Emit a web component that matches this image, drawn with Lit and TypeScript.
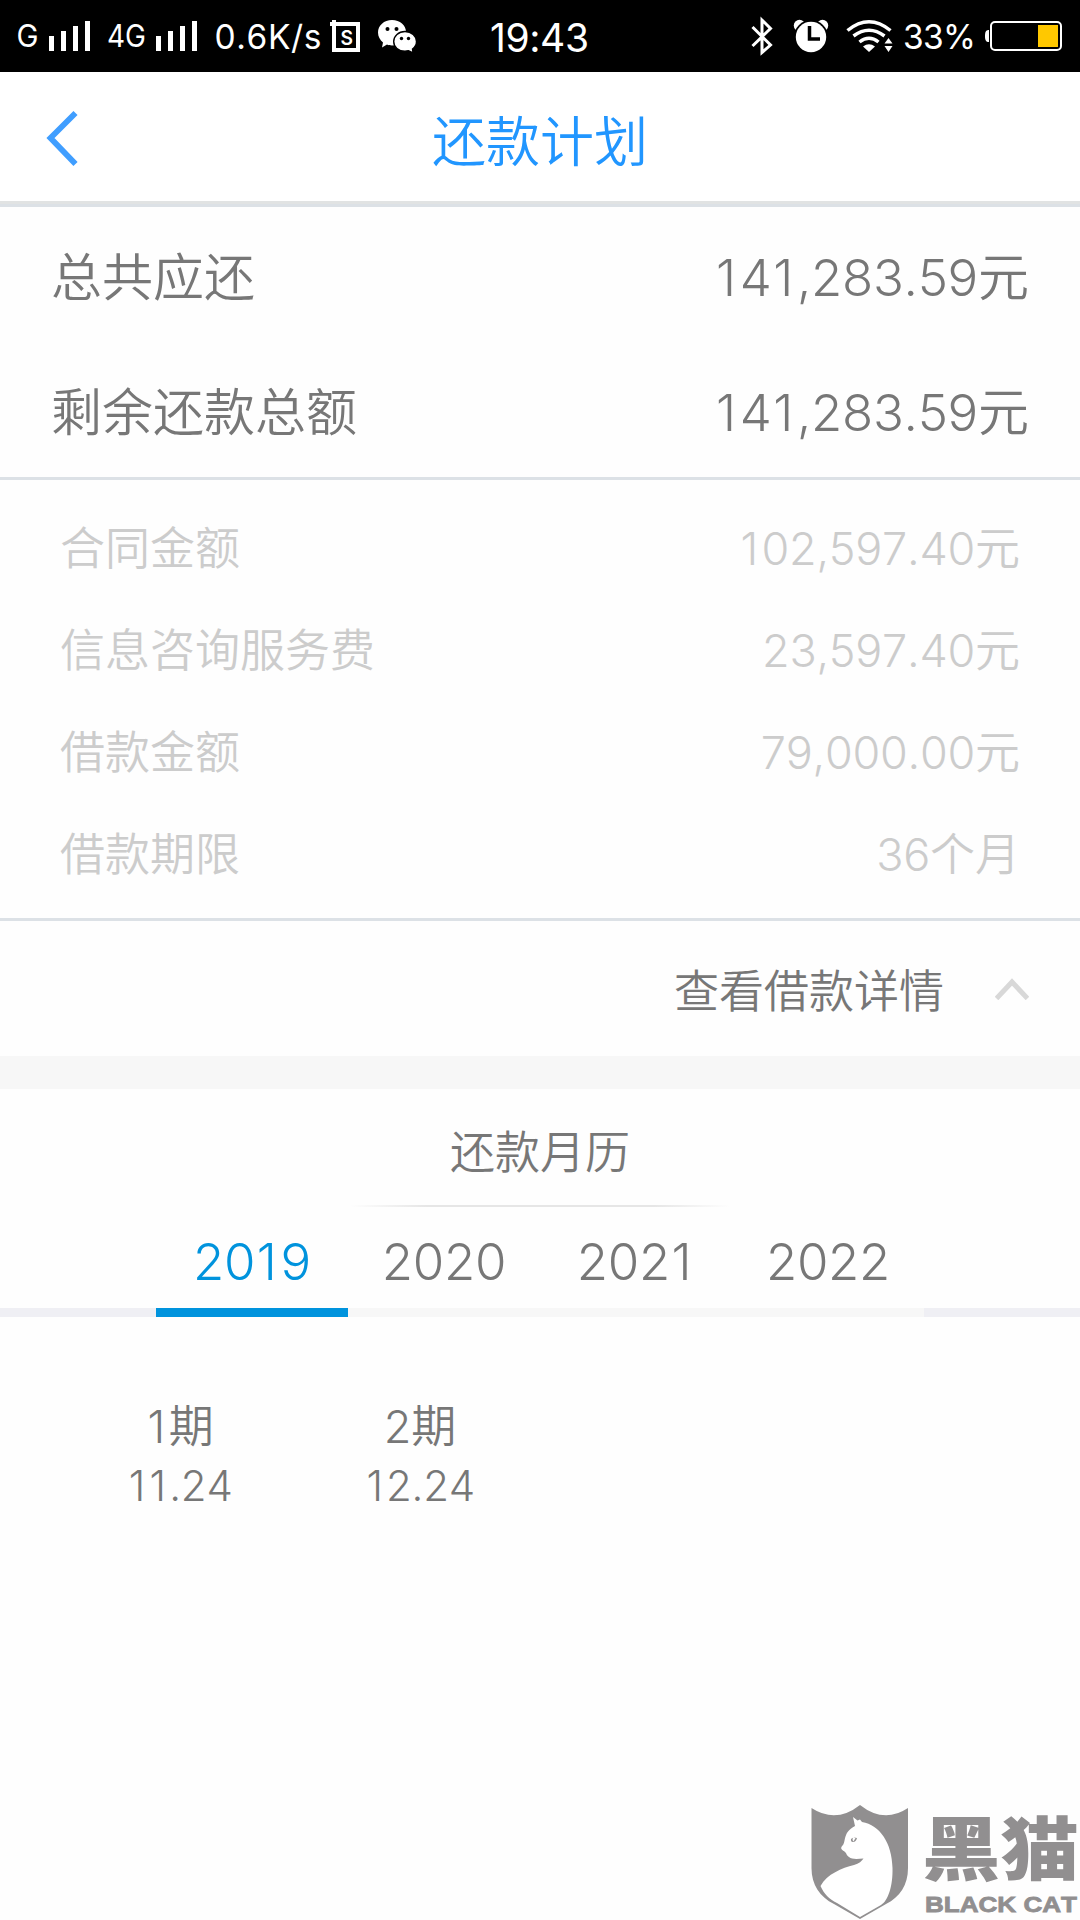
import { LitElement, html, svg, css } from "lit";
import { customElement, property, state } from "lit/decorators.js";
import { classMap } from "lit/directives/class-map.js";

// Gives the digit 1 an advance close to that of the other digits.
const digits = (s: string) =>
  [...s].map((c) => (c === "1" ? html`<span class="one">1</span>` : c));

const digitStyles = css`
  .num { letter-spacing: -0.006em; }
  .one { margin: 0 0.08em 0 0.03em; }
`;

@customElement("status-bar")
class StatusBar extends LitElement {
  static styles = css`
    :host { display: block; font-weight: 400; }
    .bar { display: block; width: 1080px; height: 72px; background: #000; }
    text { font-family: Inter, "Liberation Sans", sans-serif; fill: #fff; }
  `;
  private bars(x: number) {
    return [15, 20, 25, 30].map(
      (h, i) => svg`<rect x=${x + i * 12} y=${51 - h} width="5" height=${h} fill="#fff"></rect>`
    );
  }
  render() {
    return html`
      <svg class="bar" viewBox="0 0 1080 72">
        <text x="16.500" y="46.500" font-size="31" textLength="22" lengthAdjust="spacingAndGlyphs">G</text>
        ${this.bars(49)}
        <text x="107" y="46.500" font-size="31" textLength="39" lengthAdjust="spacingAndGlyphs">4G</text>
        ${this.bars(156)}
        <text x="214.500" y="49" font-size="33.500" textLength="107" lengthAdjust="spacing">0.6K/s</text>
        <path d="M334 24H358V50H334ZM330 24H336M334 20V26" fill="none" stroke="#fff" stroke-width="4"></path>
        <text x="340.500" y="44.500" font-size="19.500" font-weight="600" textLength="12.500" lengthAdjust="spacingAndGlyphs">S</text>
        <g fill="#fff">
          <path d="M392 20C400 20 406 25 406 32C406 40 400 45.500 392 45.500C390 45.500 388.500 45.200 387 44.600L382 47.500L383 42.500C380 40 378 36.500 378 32.500C378 25.500 384 20 392 20Z"></path>
          <path d="M405 31.500C411.500 31.500 416.500 36 416.500 41.500C416.500 44.500 415 47.200 412.500 49L413 53L408.500 50.800C407.300 51 406 51.200 405 51.200C398.500 51.200 393.700 47 393.700 41.500C393.700 36 398.500 31.500 405 31.500Z" stroke="#000" stroke-width="1.400"></path>
        </g>
        <g fill="#000"><circle cx="387.500" cy="29" r="2"></circle><circle cx="396.500" cy="29" r="2"></circle><circle cx="401.500" cy="38.500" r="1.700"></circle><circle cx="408.500" cy="38.500" r="1.700"></circle></g>
        <text x="490" y="51.500" font-size="39" textLength="99" lengthAdjust="spacing">19:43</text>
        <path d="M752.500 27L770.500 45L762 52.500V20L770.500 28.500L752.500 46" fill="none" stroke="#fff" stroke-width="3"></path>
        <g>
          <circle cx="799.500" cy="25.500" r="5.700" fill="#fff"></circle>
          <circle cx="822.500" cy="25.500" r="5.700" fill="#fff"></circle>
          <circle cx="811" cy="37" r="17" fill="#000"></circle>
          <circle cx="811" cy="37" r="15.200" fill="#fff"></circle>
          <path d="M809.500 26V39H820" fill="none" stroke="#000" stroke-width="3.500"></path>
        </g>
        <g fill="none" stroke="#fff" stroke-width="3.500">
          <path d="M847.500 30.500Q869 13 890.500 30.500"></path>
          <path d="M853.500 36Q869 24.500 884.500 36"></path>
          <path d="M859.500 42Q869 34.500 878.500 42"></path>
        </g>
        <path d="M863 46.500Q869 42 875 46.500L869 52Z" fill="#fff"></path>
        <path d="M884.500 43.500L888.500 38L892.500 43.500ZM884.500 46L888.500 52L892.500 46Z" fill="#fff"></path>
        <text x="903" y="49" font-size="33.500" textLength="73" lengthAdjust="spacing">33%</text>
        <path d="M989 30C985.800 30 985 32 985 36C985 40 985.800 42 989 42Z" fill="#fff"></path>
        <rect x="991" y="22" width="70" height="28" rx="4" fill="none" stroke="#fff" stroke-width="2"></rect>
        <rect x="1038" y="25" width="20" height="22" fill="#ffc800"></rect>
      </svg>
    `;
  }
}

@customElement("amount-row")
class AmountRow extends LitElement {
  @property() label = "";
  @property() value = "";
  @property() unit = "";
  static styles = [
    digitStyles,
    css`
      :host { display: flex; justify-content: space-between; align-items: center; }
      .value { display: flex; align-items: baseline; }
    `,
  ];
  render() {
    return html`<span>${this.label}</span>
      <span class="value"><span class="num">${digits(this.value)}</span><span>${this.unit}</span></span>`;
  }
}

@customElement("black-cat-mark")
class BlackCatMark extends LitElement {
  static styles = css`
    :host { display: block; }
    .mark { display: block; width: 270px; height: 150px; }
    .zh { font-family: "Noto Sans CJK SC", sans-serif; font-weight: 900; }
    .en { font-family: "Liberation Sans", sans-serif; font-weight: 700; stroke: #918f90; stroke-width: 0.8; }
  `;
  render() {
    return html`
      <svg class="mark" viewBox="810 1770 270 150" fill="#918f90">
        <path d="M811.500 1808Q836 1824 860 1805Q884 1824 908 1808V1868C908 1885 900 1897 886 1904L860 1919L834 1904C820 1897 811.500 1885 811.500 1868Z"></path>
        <path fill="#fff" d="M820.500 1886C827 1874 842 1868 854 1865C859 1863.500 862 1861 863.500 1858.500C857 1859 852 1859.500 849 1857C846 1855 847 1853.500 844.500 1851.500C841 1849.500 840 1848 843 1845C846 1841 843 1832 855 1826L853 1817L857.500 1820.500L860 1819.500L862 1822C880 1825 892 1843 892.500 1868C893 1886 888 1901 881 1905L860 1917L837 1903C829 1899 824 1894 820.500 1886Z"></path>
        <path d="M851 1839Q853 1836.500 857 1838Q856 1842 853 1842Q850.500 1842 851 1839Z"></path>
        <path fill="#fff" d="M853 1837L855.500 1838L853.500 1841.500L852.500 1840Z"></path>
        <text class="zh" x="922" y="1875" font-size="69" textLength="157" lengthAdjust="spacingAndGlyphs">黑猫</text>
        <text class="en" x="925" y="1912" font-size="22" textLength="152" lengthAdjust="spacingAndGlyphs">BLACK CAT</text>
      </svg>
    `;
  }
}

@customElement("app-root")
class AppRoot extends LitElement {
  @state() private year = "2019";
  private years = ["2019", "2020", "2021", "2022"];
  private totals = [
    ["总共应还", "141,283.59"],
    ["剩余还款总额", "141,283.59"],
  ];
  private details = [
    ["合同金额", "102,597.40", "元"],
    ["信息咨询服务费", "23,597.40", "元"],
    ["借款金额", "79,000.00", "元"],
    ["借款期限", "36", "个月"],
  ];
  private periods = [
    ["1期", "11.24"],
    ["2期", "12.24"],
  ];

  static styles = [
    digitStyles,
    css`
      :host {
        display: block;
        font-family: Inter, "Noto Sans CJK SC", sans-serif;
        font-weight: 350;
        font-kerning: none;
        font-feature-settings: "calt" 0;
        color: #777;
      }
      * { box-sizing: border-box; }
      .page { position: relative; display: flex; flex-direction: column; width: 1080px; height: 1920px; background: #fefefe; overflow: hidden; }
      .header {
        display: grid; grid-template-columns: 120px 1fr 120px; align-items: center;
        height: 135px; background: #fff; color: #2196ff;
        border-bottom: 3px solid #dce1e6; box-shadow: inset 0 -3px #e1e3e3;
      }
      .back { display: block; width: 36px; height: 60px; margin-left: 45px; }
      .title { text-align: center; font-size: 54px; line-height: 72px; padding-top: 9px; }
      .totals { border-bottom: 3px solid #dce1e6; padding: 0 51px; }
      .totals amount-row { height: 135px; padding-bottom: 1px; font-size: 51px; }
      .details { border-bottom: 3px solid #dce1e6; padding: 15px 60px; color: #ccc; }
      .details amount-row { height: 102px; padding-bottom: 2px; font-size: 45px; }
      .toggle { display: flex; justify-content: flex-end; align-items: center; gap: 51px; height: 135px; padding-right: 51px; font-size: 45px; }
      .chevron { width: 34px; height: 22px; }
      .gap { height: 33px; background: #f7f7f7; }
      .cal-title { display: flex; justify-content: center; align-items: center; height: 116px; padding-top: 5px; font-size: 45px; }
      .fade { width: 380px; height: 2px; margin: 0 auto 1px; background: linear-gradient(90deg, transparent, #e6e6e6 20%, #e6e6e6 80%, transparent); }
      .tabs { display: flex; height: 109px; padding: 0 156px; box-shadow: inset 0 -9px #efeff4; }
      .tab { display: flex; align-items: center; justify-content: center; width: 192px; border-bottom: 9px solid #f7f7f7; font-size: 51px; padding-top: 6px; }
      .tab.on { color: #0093dd; border-color: #0093dd; }
      .periods { display: grid; grid-template-columns: repeat(4, 240px); padding: 80px 60px 0; }
      .period { display: flex; flex-direction: column; align-items: center; font-size: 45px; line-height: 60px; }
      .date { font-size: 42px; line-height: 58px; }
      .mark { position: absolute; right: 0; bottom: 0; }
    `,
  ];

  render() {
    return html`
      <div class="page">
        <status-bar></status-bar>
        <div class="header">
          <svg class="back" viewBox="0 0 36 60"><path d="M30.500 5L5.500 30L30.500 56" fill="none" stroke="#409eff" stroke-width="5.800"></path></svg>
          <div class="title">还款计划</div>
        </div>
        <div class="totals">
          ${this.totals.map(([l, v]) => html`<amount-row .label=${l} .value=${v} .unit=${"元"}></amount-row>`)}
        </div>
        <div class="details">
          ${this.details.map(([l, v, u]) => html`<amount-row .label=${l} .value=${v} .unit=${u}></amount-row>`)}
        </div>
        <div class="toggle">
          <span>查看借款详情</span>
          <svg class="chevron" viewBox="0 0 34 22"><path d="M1.500 20.500L17 4L32.500 20.500" fill="none" stroke="#d8d8d8" stroke-width="5"></path></svg>
        </div>
        <div class="gap"></div>
        <div class="cal-title">还款月历</div>
        <div class="fade"></div>
        <div class="tabs">
          ${this.years.map((y) => html`<div class=${classMap({ tab: true, on: y === this.year })} @click=${() => (this.year = y)}><span class="num">${digits(y)}</span></div>`)}
        </div>
        <div class="periods">
          ${this.periods.map(([n, d]) => html`<div class="period"><span>${digits(n)}</span><span class="date num">${digits(d)}</span></div>`)}
        </div>
        <black-cat-mark class="mark"></black-cat-mark>
      </div>
    `;
  }
}
